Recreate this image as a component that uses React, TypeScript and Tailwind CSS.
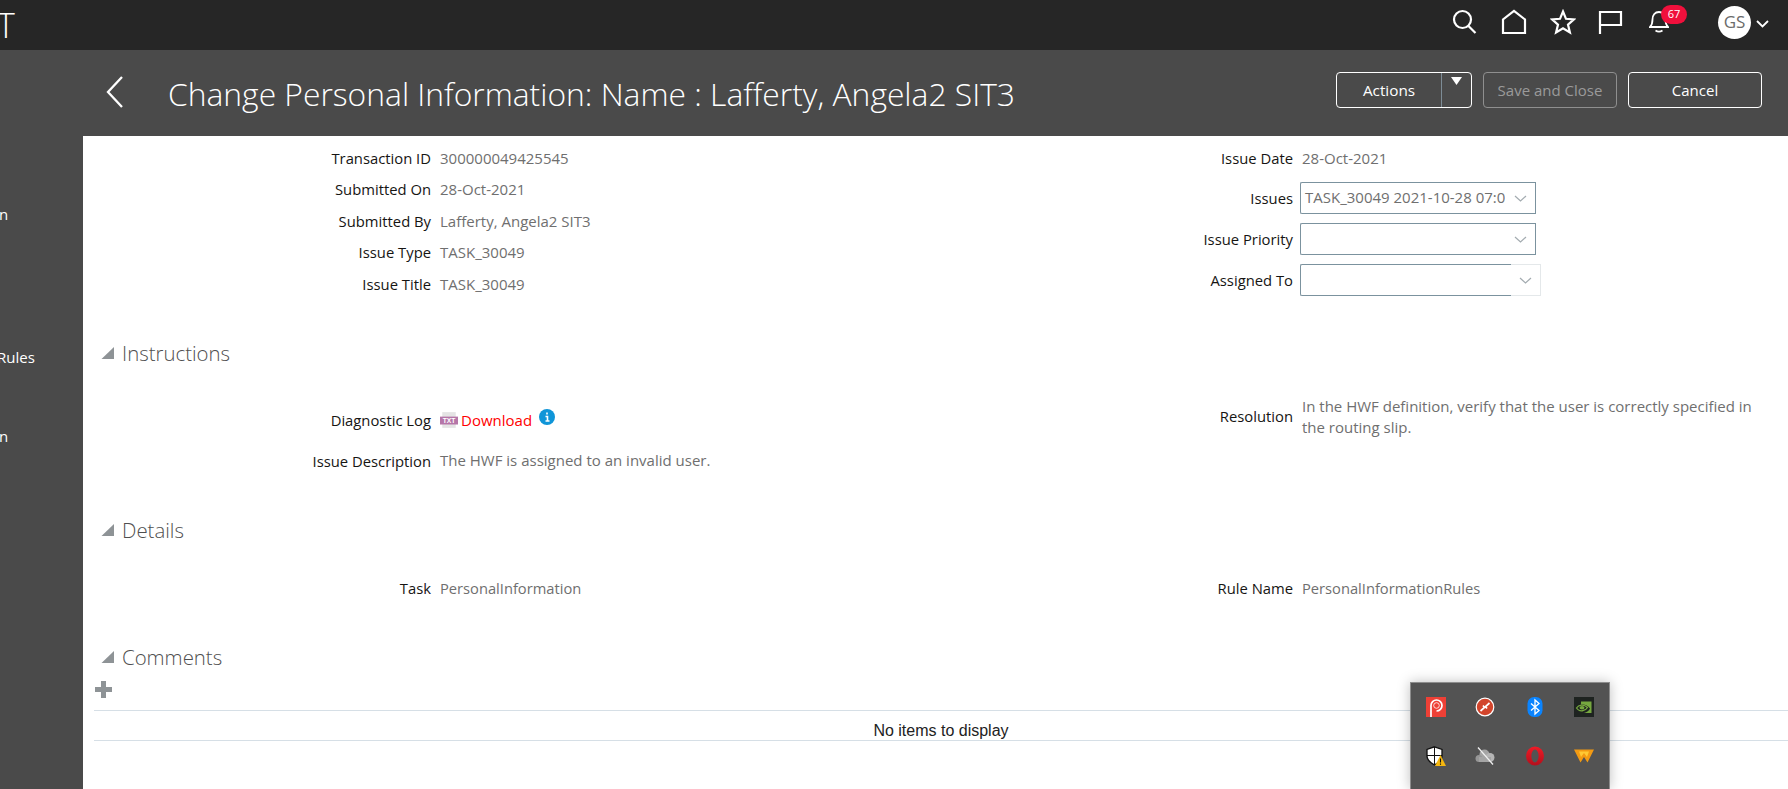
import React from "react";

const font = "font-['Open_Sans',sans-serif]";

function Field({
  label,
  width,
  children,
  className = "",
  gap = "ml-[9px]",
}: {
  label: string;
  width: number;
  children?: React.ReactNode;
  className?: string;
  gap?: string;
}) {
  return (
    <div className={`flex items-center ${className}`}>
      <div className="shrink-0 text-right text-[14.8px] text-[#161513]" style={{ width }}>
        {label}
      </div>
      <div className={`${gap} text-[15px] text-[#6f6f6f]`}>{children}</div>
    </div>
  );
}

function SectionHead({ title }: { title: string }) {
  return (
    <div className="flex items-center pl-[18px]">
      <svg width="14" height="14" viewBox="0 0 14 14">
        <path d="M.5 13 13 1v12z" fill="#8e9396" />
      </svg>
      <span className="ml-[7px] text-[20.400px] font-light leading-7 text-[#4f4f4f]">{title}</span>
    </div>
  );
}

function Select({ value, open }: { value?: string; open?: boolean }) {
  return (
    <div className={`flex h-[32px] items-stretch ${open ? "w-[241px]" : "w-[236px]"}`}>
      <div
        className={`${
          open ? "w-[211px]" : "w-[205px]"
        } shrink-0 overflow-hidden whitespace-nowrap rounded-l-[2px] border border-r-0 border-[#7b929e] pl-[4px] text-[15px] leading-[28px] text-[#6f6f6f]`}
      >
        {value}
      </div>
      <div
        className={`flex flex-1 items-center justify-center border-b border-r border-t ${
          open ? "border-[#e4e8ea]" : "border-[#7b929e]"
        }`}
      >
        <svg width="13" height="7" viewBox="0 0 13 7" fill="none" stroke="#a3abb0" strokeWidth="1.2">
          <path d="m1 1 5.500 5L12 1" />
        </svg>
      </div>
    </div>
  );
}

function HeaderIcons() {
  return (
    <div className="flex items-center pb-[6px]">
      <svg width="26" height="26" viewBox="0 0 26 26" fill="none" stroke="#fff" strokeWidth="2.200">
        <circle cx="10.500" cy="10.500" r="8.500" />
        <path d="m16.500 17 7 7" />
      </svg>
      <svg width="26" height="26" viewBox="0 0 26 26" fill="none" stroke="#fff" strokeWidth="2.200" className="ml-[23px]">
        <path d="M2 24V10.500L13 2l11 8.500V24z" />
      </svg>
      <svg width="26" height="26" viewBox="0 0 26 26" fill="none" stroke="#fff" strokeWidth="2.200" className="ml-[23px]">
        <path d="m13 2.500 3 7.300 8 .6-6 5.200 1.900 7.800-6.900-4.200-6.900 4.200L8 15.600l-6-5.200 8-.6z" />
      </svg>
      <svg width="26" height="26" viewBox="0 0 26 26" fill="none" stroke="#fff" strokeWidth="2.200" className="ml-[21px]">
        <path d="M3 25V3h21v13H3" />
      </svg>
      <div className="relative ml-[26px] h-[26px] w-[20px]">
        <svg width="20" height="24" viewBox="0 0 20 24" fill="none" stroke="#fff" strokeWidth="1.800">
          <path d="M1 18c2-2 2.500-3.500 2.500-7.500C3.500 6 6 3 10 3s6.500 3 6.500 7.500c0 4 .5 5.500 2.500 7.500z" />
          <path d="M6.500 21.500c2 1.300 5 1.300 7 0" />
        </svg>
        <div className="absolute left-[12px] top-[-4px] flex h-[19px] w-[26px] items-center justify-center rounded-full bg-[#f0103c] text-[11px] text-white">
          67
        </div>
      </div>
      <div className="ml-[49px] flex h-[33px] w-[33px] items-center justify-center rounded-full bg-white text-[17px] text-[#6b6b6b]">
        GS
      </div>
      <svg width="13" height="8" viewBox="0 0 13 8" fill="none" stroke="#fff" strokeWidth="1.800" className="ml-[5px] mr-[19px] mt-[3px]">
        <path d="m1 1 5.500 5.500L12 1" />
      </svg>
    </div>
  );
}

function TrayIcons() {
  return (
    <div className="absolute bottom-0 left-[1410px] grid h-[107px] w-[200px] grid-cols-4 grid-rows-[48px_50px] content-start border-l border-r border-t border-[#8d8d8d] bg-[#535353] shadow-[0_0_12px_rgba(0,0,0,0.25)]">
      <div className="flex items-center justify-center">
        <svg width="20" height="20" viewBox="0 0 20 20">
          <rect width="20" height="20" fill="#ee4036" />
          <path d="M5 20V8.500a5.500 5.500 0 1 1 5.500 5.500" fill="none" stroke="#fff" strokeWidth="1.700" />
          <circle cx="10.500" cy="8.500" r="2.800" fill="none" stroke="#fff" strokeWidth="0.800" />
        </svg>
      </div>
      <div className="flex items-center justify-center">
        <svg width="20" height="20" viewBox="0 0 20 20">
          <circle cx="10" cy="10" r="8.800" fill="#d2452c" stroke="#fff" strokeWidth="1.200" />
          <path d="M5.500 14 9.500 10.500 8 8.500M14.500 6 10.500 9.500 12 11.500" fill="none" stroke="#fff" strokeWidth="1.700" />
        </svg>
      </div>
      <div className="flex items-center justify-center">
        <svg width="16" height="20" viewBox="0 0 16 20">
          <rect x="0.500" width="15" height="20" rx="6.500" fill="#0a84ff" />
          <path d="m4 6.500 8 7L8 17V3l4 3.500-8 7" fill="none" stroke="#fff" strokeWidth="1.300" />
        </svg>
      </div>
      <div className="flex items-center justify-center">
        <svg width="20" height="20" viewBox="0 0 20 20">
          <rect width="20" height="20" fill="#1e2320" />
          <path d="M7 4.500h10.500V16H10c3-.5 5-2.500 6-4.500-2-3-5.500-4.500-9-4z" fill="#76a83f" />
          <path d="M2.500 11c2-3 7-4.500 11-.5-2 3.500-8 5-11 .5z" fill="none" stroke="#76a83f" strokeWidth="1.300" />
          <ellipse cx="8" cy="10.800" rx="2.500" ry="1.800" fill="#76a83f" />
        </svg>
      </div>
      <div className="flex items-center justify-center">
        <svg width="20" height="20" viewBox="0 0 20 20">
          <path d="M8.500.8 16 3.500V10c0 4-3 6.500-7.500 8.800C4 16.500 1 14 1 10V3.500z" fill="#fff" stroke="#111" strokeWidth="1.300" />
          <path d="M8.500 1v18M1 9.500h15" stroke="#111" strokeWidth="1" />
          <path d="M14.500 9 20 20H9z" fill="#f5b70f" />
          <path d="M14.500 12.500v4M14.500 17.500v1.200" stroke="#111" strokeWidth="1.100" />
        </svg>
      </div>
      <div className="flex items-center justify-center">
        <svg width="20" height="18" viewBox="0 0 20 18">
          <circle cx="9.500" cy="7.500" r="5" fill="#a4a4a4" />
          <circle cx="15" cy="10.500" r="4.500" fill="#b5b5b5" />
          <circle cx="4" cy="11.500" r="3.500" fill="#969696" />
          <rect x="4" y="10" width="12" height="5" fill="#a4a4a4" />
          <path d="m3 .5 15 17" stroke="#f0f0f0" strokeWidth="1.300" />
        </svg>
      </div>
      <div className="flex items-center justify-center">
        <svg width="20" height="20" viewBox="0 0 20 20">
          <defs>
            <linearGradient id="operaRed" x1="0" y1="0" x2="0" y2="1">
              <stop offset="0" stopColor="#f01a26" />
              <stop offset="1" stopColor="#b3101c" />
            </linearGradient>
          </defs>
          <path
            fillRule="evenodd"
            d="M10 .5a9 9.500 0 1 0 0 19 9 9.500 0 1 0 0-19zm0 3c2 0 3.600 3 3.600 6.500s-1.600 6.500-3.600 6.500-3.600-3-3.600-6.500S8 3.500 10 3.500z"
            fill="url(#operaRed)"
          />
        </svg>
      </div>
      <div className="flex items-center justify-center">
        <svg width="20" height="14" viewBox="0 0 20 14">
          <path d="M0 .5h20L13.500 13.500 10 8l-3.500 5.500z" fill="#f29a13" />
          <path d="M5 2.500h10L13 8l-3-4-3 4z" fill="#ffc933" />
        </svg>
      </div>
    </div>
  );
}

export default function App() {
  return (
    <div className={`relative h-[789px] w-[1788px] overflow-hidden bg-[#4a4a4a] ${font}`}>
      <header className="flex h-[50px] items-center justify-between bg-[#262626]">
        <div className="-ml-[3px] text-[34px] font-light leading-none text-white">T</div>
        <HeaderIcons />
      </header>

      <div className="flex h-[86px] items-start pl-[106px] pr-[26px] text-white">
        <svg width="18" height="32" viewBox="0 0 18 32" fill="none" stroke="#fff" strokeWidth="2.300" className="mt-[26px]">
          <path d="M16 1 2 16l14 15" />
        </svg>
        <h1 className="ml-[44px] mt-[22px] whitespace-nowrap text-[31.800px] font-light leading-[44px]">
          Change Personal Information: Name : Lafferty, Angela2 SIT3
        </h1>
        <div className="ml-auto mt-[22px] flex gap-[11px]">
          <div className="flex h-[36px] w-[136px] rounded-[4px] border border-white text-[15.300px]">
            <div className="flex flex-1 items-center justify-center">Actions</div>
            <div className="flex w-[30px] justify-center border-l border-[#7d8c96] pt-[4px]">
              <svg width="11" height="8" viewBox="0 0 11 8">
                <path d="M0 0h11L5.500 8z" fill="#fff" />
              </svg>
            </div>
          </div>
          <div className="flex h-[36px] w-[134px] items-center justify-center rounded-[4px] border border-[#8f8f8f] text-[15px] text-[#9a9a9a]">
            Save and Close
          </div>
          <div className="flex h-[36px] w-[134px] items-center justify-center rounded-[4px] border border-white text-[15px]">
            Cancel
          </div>
        </div>
      </div>

      <div className="flex h-[653px]">
        <aside className="w-[83px] shrink-0 overflow-hidden text-[15px] leading-5 text-white">
          <div className="mt-[68px] -ml-[1px]">n</div>
          <div className="mt-[123px] -ml-[3px]">Rules</div>
          <div className="mt-[59px] -ml-[1px]">n</div>
        </aside>

        <main className="flex-1 bg-white">
          <div className="flex pt-[6px]">
            <div className="w-[1010px]">
              <Field label="Transaction ID" width={348} className="h-[31.600px]">300000049425545</Field>
              <Field label="Submitted On" width={348} className="h-[31.600px]">28-Oct-2021</Field>
              <Field label="Submitted By" width={348} className="h-[31.600px]">Lafferty, Angela2 SIT3</Field>
              <Field label="Issue Type" width={348} className="h-[31.600px]">TASK_30049</Field>
              <Field label="Issue Title" width={348} className="h-[31.600px]">TASK_30049</Field>
            </div>
            <div>
              <Field label="Issue Date" width={200} className="mb-[8px] h-[32px]">28-Oct-2021</Field>
              <div className="flex flex-col gap-[9px]">
                <Field label="Issues" width={200} gap="ml-[7px]">
                  <Select value="TASK_30049 2021-10-28 07:0" />
                </Field>
                <Field label="Issue Priority" width={200} gap="ml-[7px]">
                  <Select />
                </Field>
                <Field label="Assigned To" width={200} gap="ml-[7px]">
                  <Select open />
                </Field>
              </div>
            </div>
          </div>

          <div className="mt-[39px]">
            <SectionHead title="Instructions" />
          </div>
          <div className="mt-[33px] flex">
            <div className="w-[1010px]">
              <Field label="Diagnostic Log" width={348} className="h-[40.500px]">
                <div className="flex items-center">
                  <svg width="18" height="18" viewBox="0 0 16 16">
                    <path d="M2 1h12v14H2z" fill="#e4e4e4" />
                    <rect y="5" width="16" height="7" fill="#b576a8" />
                    <text x="8" y="11" fontSize="6" fill="#fff" textAnchor="middle" fontFamily="Liberation Sans" fontWeight="700">TXT</text>
                  </svg>
                  <span className="ml-[3px] text-[15px] text-[#ff0000]">Download</span>
                  <svg width="16" height="16" viewBox="0 0 16 16" className="-mt-[6px] ml-[7px]">
                    <circle cx="8" cy="8" r="8" fill="#0f95d8" />
                    <path d="M8 3.500v2M6.500 7.500H8.500V12M6.500 12h4" fill="none" stroke="#fff" strokeWidth="1.600" />
                  </svg>
                </div>
              </Field>
              <Field label="Issue Description" width={348} className="h-[40.500px]">The HWF is assigned to an invalid user.</Field>
            </div>
            <div className="-mt-[4px] flex">
              <div className="w-[200px] pt-[9px] text-right text-[14.8px] text-[#161513]">Resolution</div>
              <div className="ml-[9px] w-[460px] text-[15px] leading-[21px] text-[#6f6f6f]">
                In the HWF definition, verify that the user is correctly specified in the routing slip.
              </div>
            </div>
          </div>

          <div className="mt-[35px]">
            <SectionHead title="Details" />
          </div>
          <div className="mt-[33px] flex">
            <div className="w-[1010px]">
              <Field label="Task" width={348}>
                <span className="text-[14.7px]">PersonalInformation</span>
              </Field>
            </div>
            <Field label="Rule Name" width={200}>
              <span className="text-[14.7px]">PersonalInformationRules</span>
            </Field>
          </div>

          <div className="mt-[44px]">
            <SectionHead title="Comments" />
          </div>
          <div className="mt-[10px] pl-[12px]">
            <svg width="17" height="17" viewBox="0 0 17 17">
              <path d="M6 0h5v6h6v5h-6v6H6v-6H0V6h6z" fill="#8e9396" />
            </svg>
          </div>
          <div className="ml-[11px] mt-[12px] flex h-[31px] items-center justify-center border-b border-t border-[#d6dfe6] pt-[10px] font-['Liberation_Sans',sans-serif] text-[16px] text-[#222]">
            No items to display
          </div>
        </main>
      </div>

      <TrayIcons />
    </div>
  );
}
